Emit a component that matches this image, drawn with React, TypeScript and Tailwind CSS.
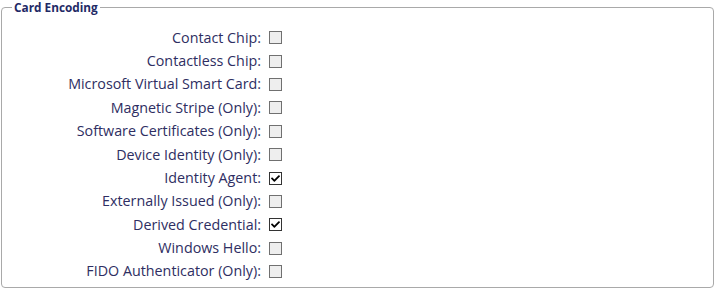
import { FaCheck } from 'react-icons/fa';

const rows: { label: string; checked: boolean }[] = [
    { label: 'Contact Chip:', checked: false },
    { label: 'Contactless Chip:', checked: false },
    { label: 'Microsoft Virtual Smart Card:', checked: false },
    { label: 'Magnetic Stripe (Only):', checked: false },
    { label: 'Software Certificates (Only):', checked: false },
    { label: 'Device Identity (Only):', checked: false },
    { label: 'Identity Agent:', checked: true },
    { label: 'Externally Issued (Only):', checked: false },
    { label: 'Derived Credential:', checked: true },
    { label: 'Windows Hello:', checked: false },
    { label: 'FIDO Authenticator (Only):', checked: false },
];

function Box({ checked }: { checked: boolean }) {
    return (
        <span
            className={
                checked
                    ? 'block w-[13px] h-[13px] border border-[#333] bg-white flex items-center justify-center'
                    : 'block w-[13px] h-[13px] border border-[#707070] bg-[#eeeeee]'
            }
        >
            {checked && <FaCheck className="w-[9px] h-[9px] text-black" />}
        </span>
    );
}

export default function App() {
    return (
        <div className="w-[716px] h-[292px] bg-white pl-px pr-[2px] font-['Open_Sans',sans-serif]">
            <fieldset className="border border-[#a9a9a9] rounded-[4px] h-[288px] px-3 pb-2">
                <legend className="-ml-[2px] px-[2px] text-[11.8px] font-bold text-[#1f2a66] leading-[14px]">
                    Card Encoding
                </legend>
                <div className="flex flex-col pt-[12px]">
                    {rows.map((r) => (
                        <div key={r.label} className="h-[23.4px] flex items-center">
                            <span className="w-[247px] text-right text-[14.3px] text-[#2e2e62] leading-none">
                                {r.label}
                            </span>
                            <span className="ml-[8px]">
                                <Box checked={r.checked} />
                            </span>
                        </div>
                    ))}
                </div>
            </fieldset>
        </div>
    );
}
